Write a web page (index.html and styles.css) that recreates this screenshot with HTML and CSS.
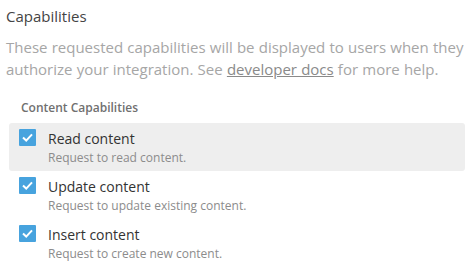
FILE: index.html
```html
<!DOCTYPE html>
<html>
<head>
<meta charset="utf-8">
<link rel="stylesheet" href="styles.css">
</head>
<body>
<div class="panel">
  <h2 class="title">Capabilities</h2>
  <p class="desc">These requested capabilities will be displayed to users when they authorize your integration. See <a class="link" href="#">developer docs</a> for more help.</p>
  <h3 class="group">Content Capabilities</h3>
  <ul class="list">
    <li class="item item-active">
      <span class="check"><svg viewBox="0 0 17 17" width="17" height="17"><path d="M4 8.6 L7.2 11.6 L13 5.4" fill="none" stroke="#fff" stroke-width="2"/></svg></span>
      <div class="text"><div class="name">Read content</div><div class="sub">Request to read content.</div></div>
    </li>
    <li class="item">
      <span class="check"><svg viewBox="0 0 17 17" width="17" height="17"><path d="M4 8.6 L7.2 11.6 L13 5.4" fill="none" stroke="#fff" stroke-width="2"/></svg></span>
      <div class="text"><div class="name">Update content</div><div class="sub">Request to update existing content.</div></div>
    </li>
    <li class="item">
      <span class="check"><svg viewBox="0 0 17 17" width="17" height="17"><path d="M4 8.6 L7.2 11.6 L13 5.4" fill="none" stroke="#fff" stroke-width="2"/></svg></span>
      <div class="text"><div class="name">Insert content</div><div class="sub">Request to create new content.</div></div>
    </li>
  </ul>
</div>
</body>
</html>
```
FILE: styles.css
```css
html, body {
  margin: 0;
  padding: 0;
  background: #fff;
}
body {
  font-family: "Open Sans", "Noto Sans", sans-serif;
}
.panel {
  padding: 5px 0 0 6px;
}
.title {
  margin: 0;
  font-size: 15px;
  font-weight: 500;
  line-height: 22px;
  color: #444;
}
.desc {
  margin: 9px 0 0 0;
  font-size: 15px;
  line-height: 22px;
  word-spacing: 0.3px;
  color: #a6a6a6;
}
.link {
  color: #8a8a8a;
  text-decoration: underline;
}
.group {
  margin: 19px 0 0 15px;
  font-size: 12px;
  font-weight: 600;
  line-height: 18px;
  color: #707070;
}
.list {
  list-style: none;
  margin: 6px 0 0 3px;
  padding: 0;
  width: 456px;
}
.item {
  display: flex;
  gap: 12px;
  padding: 6px 10px 5px 10px;
  border-radius: 3px;
  height: 37px;
}
.item-active {
  background: #eeeeee;
}
.check {
  width: 17px;
  height: 17px;
  background: #47a3de;
  border-radius: 1px;
  flex: none;
}
.check svg {
  display: block;
}
.name {
  font-size: 14px;
  line-height: 20px;
  color: #333;
}
.sub {
  font-size: 12px;
  line-height: 17px;
  color: #8c8c8c;
}
```
